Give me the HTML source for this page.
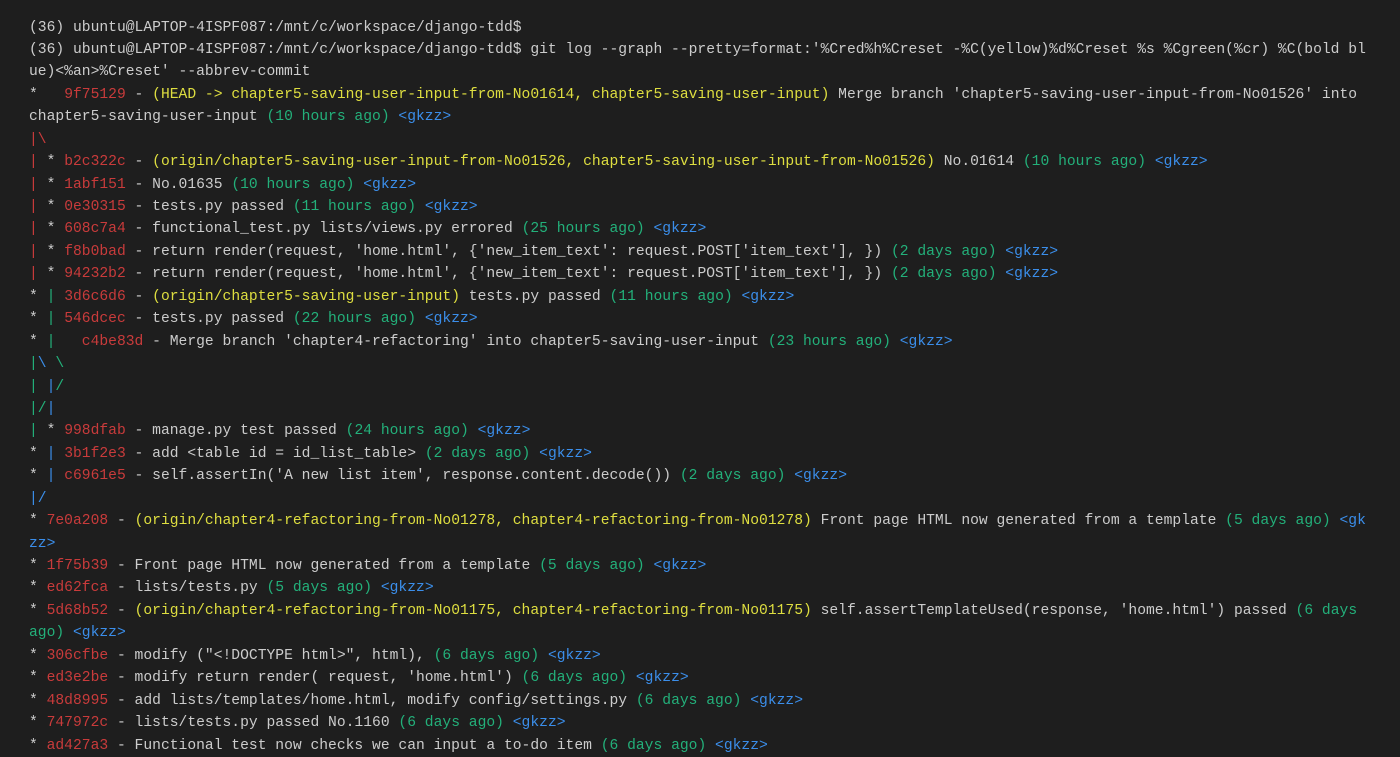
<!DOCTYPE html>
<html><head><meta charset="utf-8"><style>
html,body{margin:0;padding:0;background:#1e1e1e;width:1400px;height:748px;overflow:hidden}
pre{margin:0;position:absolute;left:29px;top:16.5px;font-family:"Liberation Mono",monospace;font-size:14.66px;line-height:22.44px;color:#cccccc;white-space:pre}
.r{color:#c93b3b}.y{color:#dede40}.g{color:#23b07a}.b{color:#3b8eea}
</style></head><body><pre>(36) ubuntu@LAPTOP-4ISPF087:/mnt/c/workspace/django-tdd$
(36) ubuntu@LAPTOP-4ISPF087:/mnt/c/workspace/django-tdd$ git log --graph --pretty=format:'%Cred%h%Creset -%C(yellow)%d%Creset %s %Cgreen(%cr) %C(bold bl
ue)&lt;%an&gt;%Creset' --abbrev-commit
*   <span class="r">9f75129</span> - <span class="y">(HEAD -&gt; chapter5-saving-user-input-from-No01614, chapter5-saving-user-input)</span> Merge branch 'chapter5-saving-user-input-from-No01526' into
chapter5-saving-user-input <span class="g">(10 hours ago)</span> <span class="b">&lt;gkzz&gt;</span>
<span class="r">|\</span>
<span class="r">|</span> * <span class="r">b2c322c</span> - <span class="y">(origin/chapter5-saving-user-input-from-No01526, chapter5-saving-user-input-from-No01526)</span> No.01614 <span class="g">(10 hours ago)</span> <span class="b">&lt;gkzz&gt;</span>
<span class="r">|</span> * <span class="r">1abf151</span> - No.01635 <span class="g">(10 hours ago)</span> <span class="b">&lt;gkzz&gt;</span>
<span class="r">|</span> * <span class="r">0e30315</span> - tests.py passed <span class="g">(11 hours ago)</span> <span class="b">&lt;gkzz&gt;</span>
<span class="r">|</span> * <span class="r">608c7a4</span> - functional_test.py lists/views.py errored <span class="g">(25 hours ago)</span> <span class="b">&lt;gkzz&gt;</span>
<span class="r">|</span> * <span class="r">f8b0bad</span> - return render(request, 'home.html', {'new_item_text': request.POST['item_text'], }) <span class="g">(2 days ago)</span> <span class="b">&lt;gkzz&gt;</span>
<span class="r">|</span> * <span class="r">94232b2</span> - return render(request, 'home.html', {'new_item_text': request.POST['item_text'], }) <span class="g">(2 days ago)</span> <span class="b">&lt;gkzz&gt;</span>
* <span class="g">|</span> <span class="r">3d6c6d6</span> - <span class="y">(origin/chapter5-saving-user-input)</span> tests.py passed <span class="g">(11 hours ago)</span> <span class="b">&lt;gkzz&gt;</span>
* <span class="g">|</span> <span class="r">546dcec</span> - tests.py passed <span class="g">(22 hours ago)</span> <span class="b">&lt;gkzz&gt;</span>
* <span class="g">|</span>   <span class="r">c4be83d</span> - Merge branch 'chapter4-refactoring' into chapter5-saving-user-input <span class="g">(23 hours ago)</span> <span class="b">&lt;gkzz&gt;</span>
<span class="g">|</span><span class="b">\</span> <span class="g">\</span>
<span class="g">|</span> <span class="b">|</span><span class="g">/</span>
<span class="g">|/</span><span class="b">|</span>
<span class="g">|</span> * <span class="r">998dfab</span> - manage.py test passed <span class="g">(24 hours ago)</span> <span class="b">&lt;gkzz&gt;</span>
* <span class="b">|</span> <span class="r">3b1f2e3</span> - add &lt;table id = id_list_table&gt; <span class="g">(2 days ago)</span> <span class="b">&lt;gkzz&gt;</span>
* <span class="b">|</span> <span class="r">c6961e5</span> - self.assertIn('A new list item', response.content.decode()) <span class="g">(2 days ago)</span> <span class="b">&lt;gkzz&gt;</span>
<span class="b">|/</span>
* <span class="r">7e0a208</span> - <span class="y">(origin/chapter4-refactoring-from-No01278, chapter4-refactoring-from-No01278)</span> Front page HTML now generated from a template <span class="g">(5 days ago)</span> <span class="b">&lt;gk
zz&gt;</span>
* <span class="r">1f75b39</span> - Front page HTML now generated from a template <span class="g">(5 days ago)</span> <span class="b">&lt;gkzz&gt;</span>
* <span class="r">ed62fca</span> - lists/tests.py <span class="g">(5 days ago)</span> <span class="b">&lt;gkzz&gt;</span>
* <span class="r">5d68b52</span> - <span class="y">(origin/chapter4-refactoring-from-No01175, chapter4-refactoring-from-No01175)</span> self.assertTemplateUsed(response, 'home.html') passed <span class="g">(6 days
ago)</span> <span class="b">&lt;gkzz&gt;</span>
* <span class="r">306cfbe</span> - modify ("&lt;!DOCTYPE html&gt;", html), <span class="g">(6 days ago)</span> <span class="b">&lt;gkzz&gt;</span>
* <span class="r">ed3e2be</span> - modify return render( request, 'home.html') <span class="g">(6 days ago)</span> <span class="b">&lt;gkzz&gt;</span>
* <span class="r">48d8995</span> - add lists/templates/home.html, modify config/settings.py <span class="g">(6 days ago)</span> <span class="b">&lt;gkzz&gt;</span>
* <span class="r">747972c</span> - lists/tests.py passed No.1160 <span class="g">(6 days ago)</span> <span class="b">&lt;gkzz&gt;</span>
* <span class="r">ad427a3</span> - Functional test now checks we can input a to-do item <span class="g">(6 days ago)</span> <span class="b">&lt;gkzz&gt;</span>
</pre></body></html>
